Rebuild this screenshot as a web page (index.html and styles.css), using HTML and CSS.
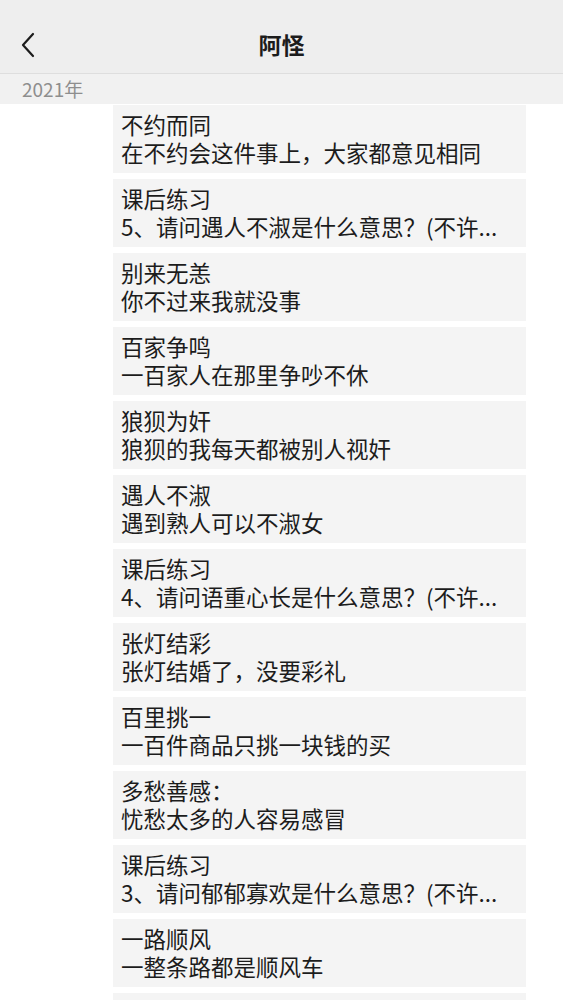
FILE: index.html
```html
<!DOCTYPE html>
<html lang="zh-CN">
<head>
    <meta charset="UTF-8">
    <meta name="viewport" content="width=device-width, initial-scale=1.0">
    <title>阿怪</title>
    <link rel="stylesheet" href="styles.css">
</head>
<body>
    <div class="topbar">
        <a class="back" href="#">
            <svg width="16" height="26" viewBox="0 0 16 26">
                <polyline points="12,2 2,13 12,24" fill="none" stroke="#1c1c1c" stroke-width="2.2" stroke-linecap="round" stroke-linejoin="round"/>
            </svg>
        </a>
        <h1 class="title">阿怪</h1>
    </div>

    <div class="year">2021年</div>

    <div class="list">
        <div class="card">
            <p>不约而同</p>
            <p>在不约会这件事上，大家都意见相同</p>
        </div>
        <div class="card">
            <p>课后练习</p>
            <p>5、请问遇人不淑是什么意思？(不许...</p>
        </div>
        <div class="card">
            <p>别来无恙</p>
            <p>你不过来我就没事</p>
        </div>
        <div class="card">
            <p>百家争鸣</p>
            <p>一百家人在那里争吵不休</p>
        </div>
        <div class="card">
            <p>狼狈为奸</p>
            <p>狼狈的我每天都被别人视奸</p>
        </div>
        <div class="card">
            <p>遇人不淑</p>
            <p>遇到熟人可以不淑女</p>
        </div>
        <div class="card">
            <p>课后练习</p>
            <p>4、请问语重心长是什么意思？(不许...</p>
        </div>
        <div class="card">
            <p>张灯结彩</p>
            <p>张灯结婚了，没要彩礼</p>
        </div>
        <div class="card">
            <p>百里挑一</p>
            <p>一百件商品只挑一块钱的买</p>
        </div>
        <div class="card">
            <p>多愁善感：</p>
            <p>忧愁太多的人容易感冒</p>
        </div>
        <div class="card">
            <p>课后练习</p>
            <p>3、请问郁郁寡欢是什么意思？(不许...</p>
        </div>
        <div class="card">
            <p>一路顺风</p>
            <p>一整条路都是顺风车</p>
        </div>
        <div class="card"></div>
    </div>
</body>
</html>
```

FILE: styles.css
```css
html, body {
    margin: 0;
    padding: 0;
}
body {
    background: #ffffff;
    font-family: "Noto Sans CJK SC", "Noto Sans", sans-serif;
    color: #1c1c1c;
    height: 1000px;
    overflow: hidden;
}
.topbar {
    display: flex;
    align-items: center;
    justify-content: center;
    position: relative;
    height: 73px;
    background-color: #eeeeee;
    border-bottom: 1px solid #dedede;
}
.back {
    position: absolute;
    left: 21px;
    top: 32px;
    display: flex;
}
.title {
    margin: 0;
    font-size: 23px;
    font-weight: 700;
    line-height: 1;
    padding-top: 16px;
}
.year {
    height: 30px;
    line-height: 30px;
    padding-left: 22px;
    background-color: #f1f1f1;
    color: #8e8e8e;
    font-size: 19px;
}
.list {
    display: flex;
    flex-direction: column;
    gap: 6px;
    padding: 1px 37px 0 113px;
}
.card {
    height: 68px;
    flex-shrink: 0;
    box-sizing: border-box;
    padding: 5px 8px 7px 8px;
    background-color: #f4f4f4;
}
.card p {
    margin: 0;
    font-size: 22.5px;
    line-height: 28px;
    white-space: nowrap;
}
```
